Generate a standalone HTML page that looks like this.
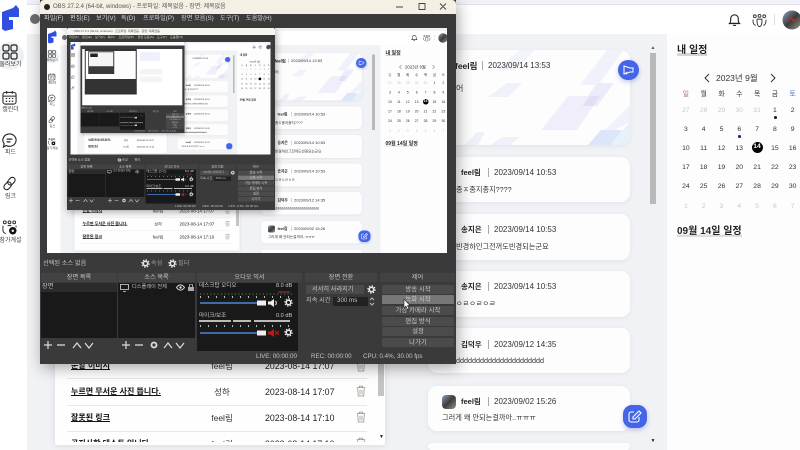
<!DOCTYPE html>
<html lang="ko"><head><meta charset="utf-8"><title>OBS</title>
<style>
html,body{margin:0;padding:0;width:800px;height:450px;overflow:hidden;background:#f1f2f5}
.P{position:absolute;left:0;top:0;width:800px;height:450px;overflow:hidden;background:#f1f2f5;font-family:"Liberation Sans","Noto Sans CJK KR",sans-serif;color:#222}
.P div,.P span,.P svg{position:absolute}
.P span{white-space:nowrap;line-height:1}
.V{left:47px;top:28px;width:400px;height:225px;overflow:hidden;background:#fff}
.Z{left:0;top:0;width:800px;height:450px;transform:scale(.5);transform-origin:0 0}
.s{left:0;top:0;width:27px;height:450px;background:#fff}
.sl{font-size:6px;color:#444;width:27px;text-align:center;left:-3px}
.h{left:0;top:4px;width:800px;height:29px;background:#fff;border-top:1px solid #dfe2ea}
.r{left:667px;top:34px;width:133px;height:416px;background:#fdfdfe}
.T{left:0;top:0;width:800px;height:442px;overflow:hidden}
.tb{left:55px;top:300px;width:330px;height:142px;background:#fefefe}
.tbs{left:55px;top:300px;width:330px;height:145px;background:#fefefe;box-shadow:0 1px 6px rgba(80,90,120,.14)}
.l{left:67px;width:300px;height:1px;background:#e9e9e4}
.tt{left:71px;font-size:8px;font-weight:700;text-decoration:underline;color:#111}
.ta{font-size:8.500px;color:#333;width:50px;text-align:center;left:197px}
.td{left:265px;font-size:8.800px;color:#222}
.c{left:428px;width:202px;background:#fdfdfe;border-radius:9px;box-shadow:0 1px 4px rgba(80,90,120,.1);overflow:hidden}
.n{font-size:7.500px;font-weight:700;left:461px;color:#222}
.d{font-size:8px;left:494px;color:#333}
.k{left:488px;width:1px;height:9px;background:#aaa}
.b{font-size:7.200px;color:#333;left:456px}
.f{width:23px;height:22px;border-radius:9px;background:#4565e8;box-shadow:0 2px 5px rgba(60,80,200,.3)}
.P .g{position:absolute;display:grid;left:677px;width:125px;grid-template-columns:repeat(7,17.8px);font-size:6.800px;text-align:center;color:#333}
.P .g span{position:static;line-height:19.2px}
.P .g em{font-style:normal;color:#c9c9c9}
.W{left:40px;top:0;width:416px;height:364px;background:#3a3a3a;box-shadow:2px 4px 14px rgba(0,0,0,.35)}
.tl{left:40px;top:0;width:416px;height:14px;background:#f5f0e6;border-radius:4px 4px 0 0}
.m{font-size:6.200px;color:#d5d5d5;top:16px}
.o{font-size:6.200px;color:#c4c4c4}
.dk{top:273px;height:9px;background:#424242}
.ds{top:283px;height:55px;background:#191919}
.bt{left:382px;width:72px;height:9px;background:#4b4b4b;border-radius:1px;font-size:6.400px;color:#c8c8c8;text-align:center;line-height:9px}
.ct{text-align:center}
</style></head><body>
<svg width="0" height="0" style="position:absolute"><defs>
<symbol id="ig" viewBox="0 0 16 16"><g fill="none" stroke="#222" stroke-width="1.200"><rect x="1" y="1" width="6" height="6" rx="1.500"/><rect x="9" y="1" width="6" height="6" rx="1.500"/><rect x="1" y="9" width="6" height="6" rx="1.500"/><rect x="9" y="9" width="6" height="6" rx="1.500"/></g></symbol>
<symbol id="ic" viewBox="0 0 16 16"><g fill="none" stroke="#222" stroke-width="1.100"><rect x="1" y="2.500" width="14" height="12.500" rx="2.500"/><path d="M1 6.500h14M5 1v3M11 1v3"/><path d="M4 9h1.500M7.300 9h1.500M10.500 9h1.500M4 12h1.500M7.300 12h1.500M10.500 12h1.500" stroke-width="1.300"/></g></symbol>
<symbol id="ib" viewBox="0 0 16 16"><path d="M8 1a7 6.600 0 1 1-3.500 12.300L1.500 15l.800-3.500A7 6.600 0 0 1 8 1z" fill="none" stroke="#222" stroke-width="1.200"/><path d="M5 6.500h6M5 9.500h4" stroke="#222" stroke-width="1.300" fill="none"/></symbol>
<symbol id="il" viewBox="0 0 16 16"><g fill="none" stroke="#222" stroke-width="1.100"><rect x="7" y="1" width="6" height="9" rx="3" transform="rotate(42 10 5.500)"/><rect x="3" y="6" width="6" height="9" rx="3" transform="rotate(42 6 10.500)"/></g></symbol>
<symbol id="ip" viewBox="0 0 16 16"><g fill="none" stroke="#222" stroke-width="1"><circle cx="3" cy="2.500" r="1.500"/><circle cx="8" cy="2.500" r="1.500"/><circle cx="13" cy="2.500" r="1.500"/><path d="M1 6v4.500c0 2 1.500 3.500 3 4M6 6h4M15 6v2"/></g><circle cx="11.500" cy="11.500" r="4" fill="#111"/><circle cx="11.500" cy="11.500" r="1.300" fill="#fff"/></symbol>
<symbol id="bell" viewBox="0 0 16 16"><path d="M3 12c1-1.500 1-2.500 1-5a4 4 0 0 1 8 0c0 2.500 0 3.500 1 5zM1.800 12.300h12.400M6.500 14.300h3" fill="none" stroke="#222" stroke-width="1.200"/></symbol>
<symbol id="ppl" viewBox="0 0 16 16"><g fill="none" stroke="#333" stroke-width="1"><circle cx="3" cy="3.500" r="1.500"/><circle cx="8" cy="3" r="1.500"/><circle cx="13" cy="3.500" r="1.500"/><path d="M1 7c0 4 1 6 3 6M15 7c0 4-1 6-3 6M5.500 6.500c-.500 4 .500 8 2.500 8s3-4 2.500-8z"/></g></symbol>
<symbol id="tr" viewBox="0 0 12 14"><path d="M1 3h10M4 3V1.200h4V3M2 3l.700 10h6.600L10 3M4.800 5.500v5.500M7.200 5.500v5.500" fill="none" stroke="#9a8f85" stroke-width=".9"/></symbol>
<symbol id="gr" viewBox="0 0 12 12"><circle cx="6" cy="6" r="3" fill="none" stroke="#e8e8e8" stroke-width="2"/><circle cx="6" cy="6" r="4.800" fill="none" stroke="#e8e8e8" stroke-width="1.600" stroke-dasharray="1.900 1.870"/></symbol>
<symbol id="tb1" viewBox="0 0 60 10"><path d="M2 5h8M6 1v8M15 5h8M31 8l4-5 4 5M43 3l4 5 4-5" fill="none" stroke="#ddd" stroke-width="1.200"/></symbol>
<symbol id="tb2" viewBox="0 0 70 10"><path d="M2 5h8M6 1v8M15 5h8M44 8l4-5 4 5M56 3l4 5 4-5" fill="none" stroke="#ddd" stroke-width="1.200"/><circle cx="34" cy="5" r="2.500" fill="none" stroke="#ddd" stroke-width="1.800"/></symbol>
<symbol id="mix" viewBox="0 0 100 68"><g fill="none"><path d="M2 11h92" stroke="#3d6b3d" stroke-width="1.500" stroke-dasharray="1 2.500"/><path d="M80 9h12" stroke="#a33" stroke-width="1"/><path d="M2 14h92" stroke="#bbb" stroke-width="2" stroke-dasharray="1 7"/><path d="M2 20h60" stroke="#4a86d8" stroke-width="1.500"/><path d="M1 38h32M35 38h18M56 38h36" stroke="#bbb" stroke-width="2"/><path d="M2 43h92" stroke="#bbb" stroke-width="2" stroke-dasharray="1 7"/><path d="M2 50h60" stroke="#4a86d8" stroke-width="1.500"/></g><rect x="59" y="17.500" width="9" height="5" fill="#eee"/><rect x="59" y="47.500" width="9" height="5" fill="#eee"/></symbol>
<symbol id="pat" viewBox="428 50 202 95"><g><polygon points="580,85 607,50 624,50 598,85" fill="#f0f2fb"/><polygon points="541,130 568,96 600,96 577,130" fill="#f1eefb"/><polygon points="581,106 597,83 614,83 597,106" fill="#ecebf9"/><polygon points="583,106 590,96 600,96 593,106" fill="#e0dff4"/><polygon points="588,145 601,130 622,130 612,145" fill="#dbe6fb"/><polygon points="610,145 630,122 630,145" fill="#e7f1fa"/><polygon points="605,130 630,105 630,122 615,130" fill="#f0f2fb"/><polygon points="488,97 507,83 522,83 508,97" fill="#f0f2fb"/><polygon points="497,70 520,50 535,50 515,70" fill="#f2f3fb"/><polygon points="465,145 477,132 485,132 478,145" fill="#eef0f9"/><polygon points="490,145 503,137 520,137 510,145" fill="#eff0fb"/></g></symbol>
<symbol id="logo" viewBox="0 0 22 33"><polygon points="2,12 13,8 16,5 19,9 19,19 13,21 13,29 5,31 2,29" fill="#2f4fe0"/><path d="M9 17h11v3h-4v7h-3v-7H9z" fill="#fff"/></symbol>
<linearGradient id="av" x1="0" y1="0" x2="1" y2="1"><stop offset="0" stop-color="#8fa0c0"/><stop offset=".5" stop-color="#3a3d3a"/><stop offset="1" stop-color="#9a9488"/></linearGradient>
</defs></svg>

<div class="P">
<div class="h"></div><div class="r"></div>
<div style="left:650px;top:53px;width:6px;height:151px;background:#b9b9b9"></div>
<span style="left:650.500px;top:46px;font-size:5px;color:#555">▲</span><span style="left:650.500px;top:439px;font-size:5px;color:#222">▼</span>
<div class="tbs"></div>
<div class="T">
<div style="left:378px;top:300px;width:6px;height:96px;background:#c4c4c4"></div><span style="left:379px;top:435px;font-size:5px">▼</span>
<div class="l" style="top:378px"></div><div class="l" style="top:405px"></div><div class="l" style="top:431px"></div>
<span class="tt" style="top:362px">눈알 이미지</span><span class="ta" style="top:362px">feel림</span><span class="td" style="top:362px">2023-08-14 17:07</span><svg style="left:356px;top:360px" width="10" height="12"><use href="#tr"/></svg>
<span class="tt" style="top:388px">누르면 무서운 사진 뜹니다.</span><span class="ta" style="top:388px">성하</span><span class="td" style="top:388px">2023-08-14 17:07</span><svg style="left:356px;top:385px" width="10" height="12"><use href="#tr"/></svg>
<span class="tt" style="top:414px">잘못된 링크</span><span class="ta" style="top:414px">feel림</span><span class="td" style="top:414px">2023-08-14 17:10</span><svg style="left:356px;top:411px" width="10" height="12"><use href="#tr"/></svg>
<span class="tt" style="top:440px">공지사항 테스트 입니다</span><span class="ta" style="top:440px">feel림</span><span class="td" style="top:440px">2023-08-14 17:10</span><svg style="left:356px;top:437px" width="10" height="12"><use href="#tr"/></svg>
</div>
<div class="c" style="top:50px;height:95px"><svg style="left:0;top:0" width="202" height="95"><use href="#pat"/></svg></div>
<span class="n" style="left:455px;top:62px;font-size:8.500px">feel림</span><div class="k" style="left:482px;top:61px"></div><span class="d" style="left:488px;top:62px">2023/09/14 13:53</span><span class="b" style="top:85px;font-size:8px">어</span>
<div class="f" style="left:618px;top:60px;width:21px;height:20px;border-radius:10px"><svg style="left:5px;top:5px" width="11" height="10" viewBox="0 0 11 10"><path d="M1 1l6 2h3v4H7L1 9zM3 7l1 2.500" fill="none" stroke="#fff" stroke-width="1"/></svg></div>
<div class="c" style="top:157px;height:45px"></div><span class="n" style="top:169px">feel림</span><div class="k" style="top:168px"></div><span class="d" style="top:169px">2023/09/14 10:53</span><span class="b" style="top:186px">종ㅈ종지종지????</span>
<div class="c" style="top:214px;height:46px"></div><span class="n" style="top:226px">송지은</span><div class="k" style="top:225px"></div><span class="d" style="top:226px">2023/09/14 10:53</span><span class="b" style="top:243px">빈경하인그전꺼도빈경되는군요</span>
<div class="c" style="top:271px;height:46px"></div><span class="n" style="top:283px">송지은</span><div class="k" style="top:282px"></div><span class="d" style="top:283px">2023/09/14 10:53</span><span class="b" style="top:300px">ㅇㄹㅇㄹㅇㄹ</span>
<div class="c" style="top:328px;height:45px"></div><span class="n" style="top:341px">김덕우</span><div class="k" style="top:340px"></div><span class="d" style="top:341px">2023/09/12 14:35</span><span class="b" style="top:357px">dddddddddddddddddddddd</span>
<div class="c" style="top:386px;height:45px"></div><svg style="left:442px;top:395px" width="14" height="14"><rect width="14" height="14" rx="4" fill="url(#av)"/></svg><span class="n" style="top:398px">feel림</span><div class="k" style="top:397px"></div><span class="d" style="top:398px">2023/09/02 15:26</span><span class="b" style="left:442px;top:414px">그러게 왜 안되는걸까아..ㅠㅠㅠ</span>
<div class="c" style="top:443px;height:7px"></div>
<div class="f" style="left:623px;top:405px;width:24px;height:23px"><svg style="left:5px;top:5px" width="14" height="13" viewBox="0 0 14 13"><path d="M6 2H3a2 2 0 0 0-2 2v6a2 2 0 0 0 2 2h6a2 2 0 0 0 2-2V7M5 9V7l6-6 2 2-6 6z" fill="none" stroke="#fff" stroke-width="1.100"/></svg></div>
<svg style="left:727px;top:12px" width="15" height="15"><use href="#bell"/></svg><svg style="left:752px;top:13px" width="15" height="15"><use href="#ppl"/></svg><div style="left:774px;top:14px;width:1px;height:11px;background:#ddd"></div>
<svg style="left:782px;top:10px" width="20" height="20"><circle cx="10" cy="10" r="9.500" fill="url(#av)"/><path d="M5 12l4-4 3 3 3-2" stroke="#a33" stroke-width="1.500" fill="none"/></svg>
<span style="left:677px;top:46px;font-size:10px;font-weight:700;background:linear-gradient(transparent 70%,#d5d5d5 70%)">내 일정</span>
<svg style="left:703px;top:73px" width="8" height="10" viewBox="0 0 8 10"><path d="M6 1L2 5l4 4" fill="none" stroke="#333"/></svg><span style="left:716px;top:74px;font-size:8.500px;color:#333">2023년 9월</span><svg style="left:769px;top:73px" width="8" height="10" viewBox="0 0 8 10"><path d="M2 1l4 4-4 4" fill="none" stroke="#333"/></svg>
<div class="g" style="top:84.500px"><span style="color:#a8706a">일</span><span>월</span><span>화</span><span>수</span><span>목</span><span>금</span><span style="color:#5a6fd0">토</span></div>
<div class="g" style="top:100.500px"><span><em>27</em></span><span><em>28</em></span><span><em>29</em></span><span><em>30</em></span><span><em>31</em></span><span>1</span><span>2</span><span>3</span><span>4</span><span>5</span><span>6</span><span>7</span><span>8</span><span>9</span><span>10</span><span>11</span><span>12</span><span>13</span><span style="color:#fff">14</span><span>15</span><span>16</span><span>17</span><span>18</span><span>19</span><span>20</span><span>21</span><span>22</span><span>23</span><span>24</span><span>25</span><span>26</span><span>27</span><span>28</span><span>29</span><span>30</span><span><em>1</em></span><span><em>2</em></span><span><em>3</em></span><span><em>4</em></span><span><em>5</em></span><span><em>6</em></span><span><em>7</em></span></div>
<div style="left:751.500px;top:142px;width:11px;height:11px;border-radius:50%;background:#000"></div><span style="left:752px;top:144px;width:10px;text-align:center;font-size:6.800px;color:#fff;font-weight:700">14</span>
<div style="left:774px;top:116px;width:2.500px;height:2.500px;border-radius:50%;background:#222"></div><div style="left:738px;top:135px;width:2.500px;height:2.500px;border-radius:50%;background:#1a2a70"></div>
<span style="left:677px;top:227px;font-size:10px;font-weight:700;background:linear-gradient(transparent 75%,#ddd 75%)">09월 14일 일정</span>
<div class="s"></div>
<svg style="left:0;top:0" width="22" height="33"><use href="#logo"/></svg>
<div style="left:-4px;top:42px;width:28px;height:28px;border-radius:50%;background:#eef0f3"></div>
<svg style="left:2px;top:44px" width="16" height="16"><use href="#ig"/></svg><span class="sl" style="top:62px">둘러보기</span>
<svg style="left:2px;top:90px" width="15" height="15"><use href="#ic"/></svg><span class="sl" style="top:107px">캘린더</span>
<svg style="left:2px;top:133px" width="15" height="15"><use href="#ib"/></svg><span class="sl" style="top:150px">피드</span>
<svg style="left:2px;top:176px" width="15" height="15"><use href="#il"/></svg><span class="sl" style="top:194px">링크</span>
<svg style="left:2px;top:220px" width="15" height="15"><use href="#ip"/></svg><span class="sl" style="top:238px">참가계설</span>
<div style="left:29.500px;top:14px;width:10px;height:10px;border-radius:50%;background:#6e6e6e"></div>
<div class="W"></div><div class="tl"></div>
<div style="left:44px;top:4px;width:6px;height:6px;border-radius:50%;background:#222"></div>
<span style="left:53px;top:4px;font-size:6px;color:#555">OBS 27.2.4 (64-bit, windows) - 프로파일: 제목없음 - 장면: 제목없음</span>
<svg style="left:396px;top:2px" width="54" height="10" viewBox="0 0 54 10"><path d="M0 5h7M23 1.500h6v6h-6zM44 1.500l6 6M50 1.500l-6 6" fill="none" stroke="#444" stroke-width=".9"/></svg>
<span class="m" style="left:44px">파일(F)</span><span class="m" style="left:70px">편집(E)</span><span class="m" style="left:96px">보기(V)</span><span class="m" style="left:121px">독(D)</span><span class="m" style="left:143px">프로파일(P)</span><span class="m" style="left:181px">장면 모음(S)</span><span class="m" style="left:220px">도구(T)</span><span class="m" style="left:246px">도움말(H)</span>
<div class="V"><div class="Z">

<div class="P">
<div class="h"></div><div class="r"></div>
<div style="left:650px;top:53px;width:6px;height:151px;background:#b9b9b9"></div>
<div class="tbs"></div>
<div class="T">
<div style="left:378px;top:300px;width:6px;height:96px;background:#c4c4c4"></div>
<div class="l" style="top:378px"></div><div class="l" style="top:405px"></div><div class="l" style="top:431px"></div>
<span class="tt" style="top:362px">눈알 이미지</span><span class="ta" style="top:362px">feel림</span><span class="td" style="top:362px">2023-08-14 17:07</span><svg style="left:356px;top:360px" width="10" height="12"><use href="#tr"/></svg>
<span class="tt" style="top:388px">누르면 무서운 사진 뜹니다.</span><span class="ta" style="top:388px">성하</span><span class="td" style="top:388px">2023-08-14 17:07</span><svg style="left:356px;top:385px" width="10" height="12"><use href="#tr"/></svg>
<span class="tt" style="top:414px">잘못된 링크</span><span class="ta" style="top:414px">feel림</span><span class="td" style="top:414px">2023-08-14 17:10</span><svg style="left:356px;top:411px" width="10" height="12"><use href="#tr"/></svg>
</div>
<div class="c" style="top:50px;height:95px"><svg style="left:0;top:0" width="202" height="95"><use href="#pat"/></svg></div>
<span class="n" style="left:455px;top:62px;font-size:8.500px">feel림</span><div class="k" style="left:482px;top:61px"></div><span class="d" style="left:488px;top:62px">2023/09/14 13:53</span><span class="b" style="top:85px;font-size:8px">어</span>
<div class="f" style="left:618px;top:60px;width:21px;height:20px;border-radius:10px"><svg style="left:5px;top:5px" width="11" height="10" viewBox="0 0 11 10"><path d="M1 1l6 2h3v4H7L1 9zM3 7l1 2.500" fill="none" stroke="#fff" stroke-width="1"/></svg></div>
<div class="c" style="top:157px;height:45px"></div><span class="n" style="top:169px">feel림</span><div class="k" style="top:168px"></div><span class="d" style="top:169px">2023/09/14 10:53</span><span class="b" style="top:186px">종ㅈ종지종지????</span>
<div class="c" style="top:214px;height:46px"></div><span class="n" style="top:226px">송지은</span><div class="k" style="top:225px"></div><span class="d" style="top:226px">2023/09/14 10:53</span><span class="b" style="top:243px">빈경하인그전꺼도빈경되는군요</span>
<div class="c" style="top:271px;height:46px"></div><span class="n" style="top:283px">송지은</span><div class="k" style="top:282px"></div><span class="d" style="top:283px">2023/09/14 10:53</span><span class="b" style="top:300px">ㅇㄹㅇㄹㅇㄹ</span>
<div class="c" style="top:328px;height:45px"></div><span class="n" style="top:341px">김덕우</span><div class="k" style="top:340px"></div><span class="d" style="top:341px">2023/09/12 14:35</span><span class="b" style="top:357px">dddddddddddddddddddddd</span>
<div class="c" style="top:386px;height:45px"></div><svg style="left:442px;top:395px" width="14" height="14"><rect width="14" height="14" rx="4" fill="url(#av)"/></svg><span class="n" style="top:398px">feel림</span><div class="k" style="top:397px"></div><span class="d" style="top:398px">2023/09/02 15:26</span><span class="b" style="left:442px;top:414px">그러게 왜 안되는걸까아..ㅠㅠㅠ</span>
<div class="c" style="top:443px;height:7px"></div>
<div class="f" style="left:623px;top:405px;width:24px;height:23px"><svg style="left:5px;top:5px" width="14" height="13" viewBox="0 0 14 13"><path d="M6 2H3a2 2 0 0 0-2 2v6a2 2 0 0 0 2 2h6a2 2 0 0 0 2-2V7M5 9V7l6-6 2 2-6 6z" fill="none" stroke="#fff" stroke-width="1.100"/></svg></div>
<svg style="left:727px;top:12px" width="15" height="15"><use href="#bell"/></svg><svg style="left:752px;top:13px" width="15" height="15"><use href="#ppl"/></svg><div style="left:774px;top:14px;width:1px;height:11px;background:#ddd"></div>
<svg style="left:782px;top:10px" width="20" height="20"><circle cx="10" cy="10" r="9.500" fill="url(#av)"/></svg>
<span style="left:677px;top:46px;font-size:10px;font-weight:700;background:linear-gradient(transparent 70%,#d5d5d5 70%)">내 일정</span>
<svg style="left:703px;top:73px" width="8" height="10" viewBox="0 0 8 10"><path d="M6 1L2 5l4 4" fill="none" stroke="#333"/></svg><span style="left:716px;top:74px;font-size:8.500px;color:#333">2023년 9월</span><svg style="left:769px;top:73px" width="8" height="10" viewBox="0 0 8 10"><path d="M2 1l4 4-4 4" fill="none" stroke="#333"/></svg>
<div class="g" style="top:84.500px"><span style="color:#a8706a">일</span><span>월</span><span>화</span><span>수</span><span>목</span><span>금</span><span style="color:#5a6fd0">토</span></div>
<div class="g" style="top:100.500px"><span><em>27</em></span><span><em>28</em></span><span><em>29</em></span><span><em>30</em></span><span><em>31</em></span><span>1</span><span>2</span><span>3</span><span>4</span><span>5</span><span>6</span><span>7</span><span>8</span><span>9</span><span>10</span><span>11</span><span>12</span><span>13</span><span style="color:#fff">14</span><span>15</span><span>16</span><span>17</span><span>18</span><span>19</span><span>20</span><span>21</span><span>22</span><span>23</span><span>24</span><span>25</span><span>26</span><span>27</span><span>28</span><span>29</span><span>30</span><span><em>1</em></span><span><em>2</em></span><span><em>3</em></span><span><em>4</em></span><span><em>5</em></span><span><em>6</em></span><span><em>7</em></span></div>
<div style="left:751.500px;top:142px;width:11px;height:11px;border-radius:50%;background:#000"></div><span style="left:752px;top:144px;width:10px;text-align:center;font-size:6.800px;color:#fff;font-weight:700">14</span>
<span style="left:677px;top:227px;font-size:10px;font-weight:700;background:linear-gradient(transparent 75%,#ddd 75%)">09월 14일 일정</span>
<div class="s"></div>
<svg style="left:0;top:0" width="22" height="33"><use href="#logo"/></svg>
<div style="left:-4px;top:42px;width:28px;height:28px;border-radius:50%;background:#eef0f3"></div>
<svg style="left:2px;top:44px" width="16" height="16"><use href="#ig"/></svg><span class="sl" style="top:62px">둘러보기</span>
<svg style="left:2px;top:90px" width="15" height="15"><use href="#ic"/></svg><span class="sl" style="top:107px">캘린더</span>
<svg style="left:2px;top:133px" width="15" height="15"><use href="#ib"/></svg><span class="sl" style="top:150px">피드</span>
<svg style="left:2px;top:176px" width="15" height="15"><use href="#il"/></svg><span class="sl" style="top:194px">링크</span>
<svg style="left:2px;top:220px" width="15" height="15"><use href="#ip"/></svg><span class="sl" style="top:238px">참가계설</span>
<div style="left:29.500px;top:14px;width:10px;height:10px;border-radius:50%;background:#6e6e6e"></div>
<div class="W"></div><div class="tl" style="background:#f8f6f0"></div>
<span style="left:53px;top:4px;font-size:6px;color:#555">OBS 27.2.4 (64-bit, windows) - 프로파일: 제목없음 - 장면: 제목없음</span>
<span class="m" style="left:44px">파일(F)</span><span class="m" style="left:70px">편집(E)</span><span class="m" style="left:96px">보기(V)</span><span class="m" style="left:121px">독(D)</span><span class="m" style="left:143px">프로파일(P)</span><span class="m" style="left:181px">장면 모음(S)</span><span class="m" style="left:220px">도구(T)</span><span class="m" style="left:246px">도움말(H)</span>
<div class="V"><div class="Z">

<div class="P">
<div class="h"></div><div class="r"></div>
<div style="left:650px;top:53px;width:6px;height:151px;background:#b9b9b9"></div>
<div class="tbs"></div>
<div class="T">
<span class="tt" style="top:388px">누르면 무서운 사진 뜹니다.</span><span class="ta" style="top:388px">성하</span><span class="td" style="top:388px">2023-08-14 17:07</span>
<span class="tt" style="top:414px">잘못된 링크</span><span class="ta" style="top:414px">feel림</span><span class="td" style="top:414px">2023-08-14 17:10</span>
</div>
<div class="c" style="top:50px;height:95px"><svg style="left:0;top:0" width="202" height="95"><use href="#pat"/></svg></div>
<span class="d" style="left:488px;top:62px">2023/09/14 13:53</span>
<div class="f" style="left:618px;top:60px;width:21px;height:20px;border-radius:10px"></div>
<div class="c" style="top:157px;height:45px"></div><span class="n" style="top:169px">feel림</span><span class="d" style="top:169px">2023/09/14 10:53</span><span class="b" style="top:186px">종ㅈ종지종지????</span>
<div class="c" style="top:214px;height:46px"></div><span class="n" style="top:226px">송지은</span><span class="d" style="top:226px">2023/09/14 10:53</span><span class="b" style="top:243px">빈경하인그전꺼도빈경되는군요</span>
<div class="c" style="top:271px;height:46px"></div><span class="n" style="top:283px">송지은</span><span class="d" style="top:283px">2023/09/14 10:53</span>
<div class="c" style="top:328px;height:45px"></div><span class="n" style="top:341px">김덕우</span><span class="d" style="top:341px">2023/09/12 14:35</span><span class="b" style="top:357px">dddddddddddddddddddddd</span>
<div class="c" style="top:386px;height:45px"></div><span class="n" style="top:398px">feel림</span><span class="d" style="top:398px">2023/09/02 15:26</span><span class="b" style="left:442px;top:414px">그러게 왜 안되는걸까아..ㅠㅠㅠ</span>
<div class="f" style="left:623px;top:405px;width:24px;height:23px"></div>
<svg style="left:727px;top:12px" width="15" height="15"><use href="#bell"/></svg><svg style="left:752px;top:13px" width="15" height="15"><use href="#ppl"/></svg>
<svg style="left:782px;top:10px" width="20" height="20"><circle cx="10" cy="10" r="9.500" fill="url(#av)"/></svg>
<span style="left:677px;top:46px;font-size:10px;font-weight:700">내 일정</span>
<span style="left:716px;top:74px;font-size:8.500px;color:#333">2023년 9월</span>
<div class="g" style="top:84.500px"><span>일</span><span>월</span><span>화</span><span>수</span><span>목</span><span>금</span><span>토</span></div>
<div class="g" style="top:100.500px"><span><em>27</em></span><span><em>28</em></span><span><em>29</em></span><span><em>30</em></span><span><em>31</em></span><span>1</span><span>2</span><span>3</span><span>4</span><span>5</span><span>6</span><span>7</span><span>8</span><span>9</span><span>10</span><span>11</span><span>12</span><span>13</span><span>14</span><span>15</span><span>16</span><span>17</span><span>18</span><span>19</span><span>20</span><span>21</span><span>22</span><span>23</span><span>24</span><span>25</span><span>26</span><span>27</span><span>28</span><span>29</span><span>30</span></div>
<div style="left:751.500px;top:142px;width:11px;height:11px;border-radius:50%;background:#000"></div>
<span style="left:677px;top:227px;font-size:10px;font-weight:700">09월 14일 일정</span>
<div class="s"></div>
<svg style="left:0;top:0" width="22" height="33"><use href="#logo"/></svg>
<svg style="left:2px;top:44px" width="16" height="16"><use href="#ig"/></svg>
<svg style="left:2px;top:90px" width="15" height="15"><use href="#ic"/></svg>
<svg style="left:2px;top:133px" width="15" height="15"><use href="#ib"/></svg>
<svg style="left:2px;top:176px" width="15" height="15"><use href="#il"/></svg>
<div class="W"></div><div class="tl" style="background:#fff"></div>
<div class="V"><div style="left:0;top:0;width:400px;height:225px;background:#fff"></div>
<div style="left:10px;top:0;width:208px;height:182px;background:#333"></div><div style="left:14px;top:8px;width:200px;height:112px;background:#fdfdfd"></div><div style="left:24px;top:9px;width:104px;height:91px;background:#3a3a3a"></div><div style="left:27px;top:13px;width:97px;height:56px;background:#f4f4f4"></div><div style="left:32px;top:18px;width:30px;height:14px;background:#222"></div><div style="left:230px;top:12px;width:80px;height:36px;background:#eef0fb"></div><div style="left:230px;top:80px;width:90px;height:22px;background:#f4f4f6"></div><div style="left:230px;top:110px;width:90px;height:22px;background:#f4f4f6"></div></div>
<div class="ds" style="left:41px;width:76px"></div><div class="ds" style="left:118px;width:77px"></div><div class="ds" style="left:197px;width:101px;height:68px"></div>
<span class="o" style="left:43px;top:261px">선택된 소스 없음</span>
<span class="o ct" style="left:41px;width:76px;top:275px">장면 목록</span><span class="o ct" style="left:118px;width:77px;top:275px">소스 목록</span><span class="o ct" style="left:197px;width:105px;top:275px">오디오 믹서</span><span class="o ct" style="left:305px;width:72px;top:275px">장면 전환</span><span class="o ct" style="left:380px;width:75px;top:275px">제어</span>
<svg style="left:198px;top:283px" width="100" height="68"><use href="#mix"/></svg>
<div class="bt" style="top:285px">방송 시작</div><div class="bt" style="top:295px;background:#777">녹화 시작</div><div class="bt" style="top:306px">가상 카메라 시작</div><div class="bt" style="top:317px">편집 방식</div><div class="bt" style="top:327px">설정</div><div class="bt" style="top:338px">나가기</div>
<span class="o" style="left:256px;top:354px">LIVE: 00:00:00</span><span class="o" style="left:311px;top:354px">REC: 00:00:00</span><span class="o" style="left:363px;top:354px">CPU: 0.4%, 30.00 fps</span>
</div>

</div></div>
<div class="ds" style="left:41px;width:76px"></div><div style="left:41px;top:283px;width:76px;height:9px;background:#2b2b2b"></div><div class="ds" style="left:118px;width:77px"></div><div class="ds" style="left:197px;width:101px;height:68px"></div>
<span class="o" style="left:43px;top:261px">선택된 소스 없음</span><span class="o" style="left:150px;top:261px">속성</span><span class="o" style="left:175px;top:261px">필터</span>
<svg style="left:141px;top:260px" width="8" height="8"><use href="#gr"/></svg>
<div class="dk" style="left:41px;width:76px"></div><div class="dk" style="left:118px;width:77px"></div><div class="dk" style="left:197px;width:105px"></div><div class="dk" style="left:305px;width:72px"></div><div class="dk" style="left:380px;width:75px"></div>
<span class="o ct" style="left:41px;width:76px;top:275px">장면 목록</span><span class="o ct" style="left:118px;width:77px;top:275px">소스 목록</span><span class="o ct" style="left:197px;width:105px;top:275px">오디오 믹서</span><span class="o ct" style="left:305px;width:72px;top:275px">장면 전환</span><span class="o ct" style="left:380px;width:75px;top:275px">제어</span>
<span class="o" style="left:43px;top:284px">장면</span><span class="o" style="left:132px;top:284px;font-size:5.200px">디스플레이 전체</span>
<svg style="left:120px;top:284px" width="9" height="8" viewBox="0 0 9 8"><path d="M.500.500h8v5h-8zM3 7.500h3" fill="none" stroke="#ddd" stroke-width=".8"/></svg>
<svg style="left:176px;top:284px" width="9" height="7" viewBox="0 0 9 7"><path d="M.500 3.500C3 0 6 0 8.500 3.500 6 7 3 7 .500 3.500z" fill="none" stroke="#ddd"/><circle cx="4.500" cy="3.500" r="1.200" fill="#ddd"/></svg>
<svg style="left:42px;top:340px" width="60" height="10"><use href="#tb1"/></svg><svg style="left:120px;top:340px" width="70" height="10"><use href="#tb2"/></svg>
<svg style="left:198px;top:283px" width="100" height="68"><use href="#mix"/></svg>
<span style="left:199px;top:284px;font-size:6px;color:#ccc">데스크탑 오디오</span><span style="left:276px;top:284px;font-size:6px;color:#ccc">8.0 dB</span>
<span style="left:199px;top:314px;font-size:6px;color:#ccc">마이크/보조</span><span style="left:276px;top:314px;font-size:6px;color:#ccc">0.0 dB</span>
<svg style="left:268px;top:298px" width="10" height="10" viewBox="0 0 10 10"><path d="M0 3.500h2.500L6 1v8L2.500 6.500H0z" fill="#eee"/><path d="M7.500 3c1 1.200 1 2.800 0 4" stroke="#eee" fill="none"/></svg><svg style="left:284px;top:298px" width="9" height="9"><use href="#gr"/></svg>
<svg style="left:268px;top:328px" width="12" height="10" viewBox="0 0 12 10"><path d="M0 3.500h2.500L6 1v8L2.500 6.500H0z" fill="#c01818"/><path d="M7 3l4 4M11 3L7 7" stroke="#c01818"/></svg><svg style="left:284px;top:328px" width="9" height="9"><use href="#gr"/></svg>
<div style="left:306px;top:285px;width:58px;height:9px;background:#4a4a4a"></div><span class="o" style="left:312px;top:286px">서서히 사라지기</span><svg style="left:367px;top:285px" width="9" height="9"><use href="#gr"/></svg>
<span class="o" style="left:306px;top:298px">지속 시간</span><div style="left:333px;top:297px;width:35px;height:9px;background:#222"></div><span class="o" style="left:337px;top:298px">300 ms</span>
<div class="bt" style="top:285px">방송 시작</div><div class="bt" style="top:295px;background:#777">녹화 시작</div><div class="bt" style="top:306px">가상 카메라 시작</div><div class="bt" style="top:317px">편집 방식</div><div class="bt" style="top:327px">설정</div><div class="bt" style="top:338px">나가기</div>
<span class="o" style="left:256px;top:354px">LIVE: 00:00:00</span><span class="o" style="left:311px;top:354px">REC: 00:00:00</span><span class="o" style="left:363px;top:354px">CPU: 0.4%, 30.00 fps</span>
</div>

</div></div>
<div style="left:41px;top:255px;width:414px;height:15px;background:#3a3a3a"></div>
<div class="ds" style="left:41px;width:76px"></div><div style="left:41px;top:283px;width:76px;height:9px;background:#2b2b2b"></div><div class="ds" style="left:118px;width:77px"></div><div class="ds" style="left:197px;width:101px;height:68px"></div>
<span class="o" style="left:43px;top:261px">선택된 소스 없음</span><span class="o" style="left:151px;top:261px;color:#999">속성</span><span class="o" style="left:178px;top:261px;color:#999">필터</span>
<svg style="left:141px;top:259px" width="9" height="9"><use href="#gr"/></svg><svg style="left:168px;top:259px" width="9" height="9"><use href="#gr"/></svg>
<div class="dk" style="left:41px;width:76px"></div><div class="dk" style="left:118px;width:77px"></div><div class="dk" style="left:197px;width:105px"></div><div class="dk" style="left:305px;width:72px"></div><div class="dk" style="left:380px;width:75px"></div>
<span class="o ct" style="left:41px;width:76px;top:274.500px">장면 목록</span><span class="o ct" style="left:118px;width:77px;top:274.500px">소스 목록</span><span class="o ct" style="left:197px;width:105px;top:274.500px">오디오 믹서</span><span class="o ct" style="left:305px;width:72px;top:274.500px">장면 전환</span><span class="o ct" style="left:380px;width:75px;top:274.500px">제어</span>
<span class="o" style="left:42px;top:284px">장면</span><span class="o" style="left:132px;top:284.500px;font-size:5.200px">디스플레이 전체</span>
<svg style="left:120px;top:284px" width="9" height="8" viewBox="0 0 9 8"><path d="M.500.500h8v5h-8zM3 7.500h3" fill="none" stroke="#ddd" stroke-width=".8"/></svg>
<svg style="left:176px;top:284px" width="9" height="7" viewBox="0 0 9 7"><path d="M.500 3.500C3 0 6 0 8.500 3.500 6 7 3 7 .500 3.500z" fill="none" stroke="#ddd"/><circle cx="4.500" cy="3.500" r="1.200" fill="#ddd"/></svg>
<svg style="left:188px;top:284px" width="6" height="7" viewBox="0 0 6 7"><rect y="3" width="6" height="4" fill="#aaa"/><path d="M1.500 3V1.500a1.500 1.500 0 0 1 3 0V3" fill="none" stroke="#aaa"/></svg>
<svg style="left:42px;top:340px" width="60" height="10"><use href="#tb1"/></svg><svg style="left:120px;top:340px" width="70" height="10"><use href="#tb2"/></svg>
<svg style="left:198px;top:283px" width="100" height="68"><use href="#mix"/></svg>
<span style="left:199px;top:284px;font-size:5.600px;color:#ccc">데스크탑 오디오</span><span style="left:276px;top:284px;font-size:5.600px;color:#ccc">8.0 dB</span>
<span style="left:199px;top:314px;font-size:5.600px;color:#ccc">마이크/보조</span><span style="left:276px;top:314px;font-size:5.600px;color:#ccc">0.0 dB</span>
<svg style="left:268px;top:298px" width="10" height="10" viewBox="0 0 10 10"><path d="M0 3.500h2.500L6 1v8L2.500 6.500H0z" fill="#eee"/><path d="M7.500 3c1 1.200 1 2.800 0 4" stroke="#eee" fill="none"/></svg><svg style="left:284px;top:298px" width="9" height="9"><use href="#gr"/></svg>
<svg style="left:268px;top:328px" width="12" height="10" viewBox="0 0 12 10"><path d="M0 3.500h2.500L6 1v8L2.500 6.500H0z" fill="#c01818"/><path d="M7 3l4 4M11 3L7 7" stroke="#c01818"/></svg><svg style="left:284px;top:328px" width="9" height="9"><use href="#gr"/></svg>
<div style="left:306px;top:285px;width:58px;height:9px;background:#4a4a4a"></div><span class="o" style="left:312px;top:286.500px">서서히 사라지기</span><svg style="left:367px;top:285px" width="9" height="9"><use href="#gr"/></svg>
<span class="o" style="left:306px;top:298px">지속 시간</span><div style="left:333px;top:297px;width:35px;height:9px;background:#222"></div><span class="o" style="left:337px;top:298px">300 ms</span>
<svg style="left:369px;top:297px" width="6" height="9" viewBox="0 0 6 9"><path d="M1 3l2-2 2 2M1 6l2 2 2-2" fill="none" stroke="#bbb"/></svg>
<div class="bt" style="top:285px">방송 시작</div><div class="bt" style="top:295px;background:#777">녹화 시작</div><div class="bt" style="top:306px">가상 카메라 시작</div><div class="bt" style="top:317px">편집 방식</div><div class="bt" style="top:327px">설정</div><div class="bt" style="top:338px">나가기</div>
<span class="o" style="left:256px;top:354px">LIVE: 00:00:00</span><span class="o" style="left:311px;top:354px">REC: 00:00:00</span><span class="o" style="left:363px;top:354px">CPU: 0.4%, 30.00 fps</span>
<svg style="left:403px;top:299px" width="8" height="11" viewBox="0 0 8 11"><path d="M1 0v9l2-2 1.500 3.500 1.500-.700L4.500 6.500 7 6.500z" fill="#fff" stroke="#222" stroke-width=".6"/></svg>
</div>
</body></html>
